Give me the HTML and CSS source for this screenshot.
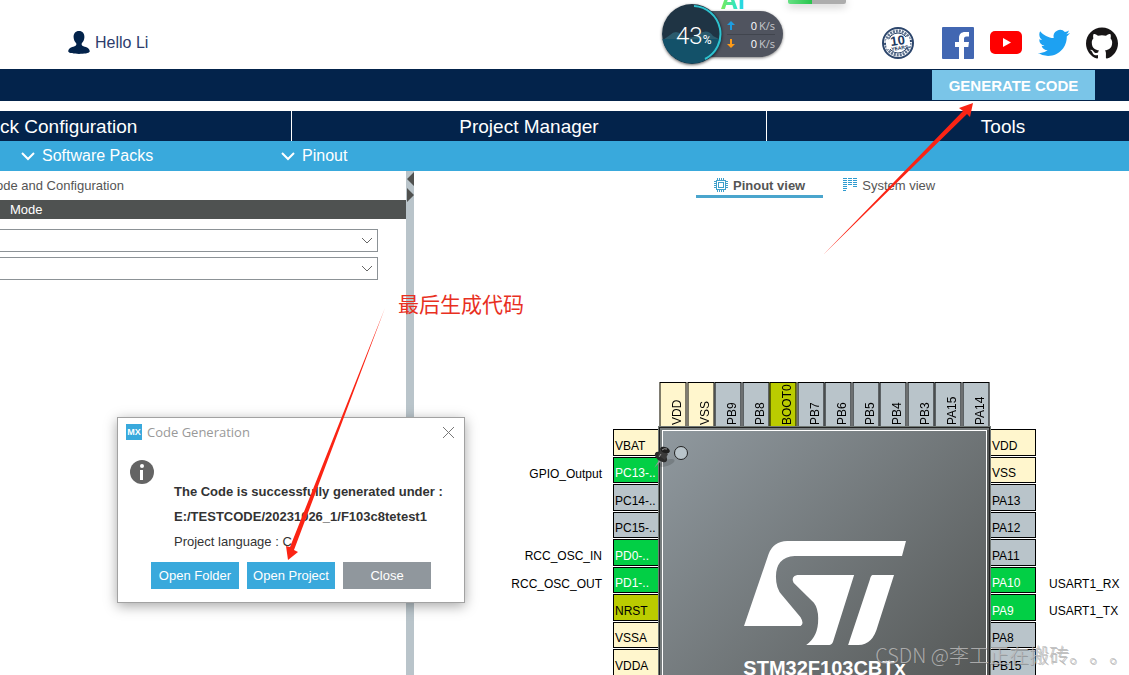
FILE: index.html
```html
<!DOCTYPE html>
<html lang="en">
<head>
  <meta charset="UTF-8" />
  <meta name="viewport" content="width=device-width, initial-scale=1.0"/>
  <title>Pinout &amp; Configuration</title>
  <link rel="stylesheet" href="styles.css">
</head>
<body>
  <header class="header">
    <a class="user" href="#">
      <svg width="22" height="24" viewBox="0 0 22 24"><path fill="#03234b" d="M11 0c3.600 0 5.600 2.600 5.400 6.200-.1 2.600-1.200 4.600-2.600 6-.5 1.600 0 2.400 1.600 3 3.600 1 6.200 2.200 6.400 5.400C21 22.400 16 23 11 23S1 22.400.2 20.600c.2-3.200 2.800-4.400 6.400-5.400 1.600-.6 2.100-1.400 1.600-3-1.400-1.400-2.500-3.400-2.600-6C5.400 2.600 7.400 0 11 0z"/></svg>
      <span>Hello Li</span>
    </a>
    <nav class="social">
      <a class="badge" href="#" aria-label="10 years">
        <svg width="32" height="32" viewBox="0 0 32 32">
          <circle cx="16" cy="16" r="15" fill="#fff" stroke="#2c466c" stroke-width="2"/>
          <circle cx="16" cy="16" r="12" fill="none" stroke="#5d7290" stroke-width="3" stroke-dasharray="2 1"/>
          <circle cx="16" cy="16" r="10" fill="#fff" stroke="#2c466c" stroke-width="1"/>
          <rect x="4" y="11" width="24" height="10" fill="#fff" transform="rotate(-8 16 16)"/>
          <g transform="rotate(-8 16 16)" fill="#1d3860" font-family="Liberation Sans, sans-serif" font-weight="bold" text-anchor="middle">
            <text x="16" y="18" font-size="13">10</text>
            <text x="17" y="23" font-size="5">YEARS</text>
          </g>
          <circle cx="3" cy="17" r="1" fill="#1d3860"/><circle cx="29" cy="14" r="1" fill="#1d3860"/>
        </svg>
      </a>
      <a href="#" aria-label="Facebook">
        <svg width="32" height="32" viewBox="0 0 32 32"><rect width="32" height="32" rx="1" fill="#4267b2"/><path fill="#fff" d="M17 32V20h-4v-5h4v-4c0-4 2.500-6 6-6h4v4.500h-2.500c-2 0-2.500 1-2.500 2.500v3h5l-.7 5H22v12z"/></svg>
      </a>
      <a href="#" aria-label="YouTube">
        <svg width="32" height="32" viewBox="0 0 32 32"><rect y="4" width="32" height="23" rx="5" fill="#f00"/><path fill="#fff" d="M13 11l8 4.500-8 4.500z"/></svg>
      </a>
      <a href="#" aria-label="Twitter">
        <svg width="32" height="32" viewBox="0 0 24 24"><path fill="#1da1f2" d="M23.953 4.570a10 10 0 01-2.825.775 4.958 4.958 0 002.163-2.723c-.951.555-2.005.959-3.127 1.184a4.920 4.920 0 00-8.384 4.482C7.690 8.095 4.067 6.130 1.640 3.162a4.822 4.822 0 00-.666 2.475c0 1.710.87 3.213 2.188 4.096a4.904 4.904 0 01-2.228-.616v.06a4.923 4.923 0 003.946 4.827 4.996 4.996 0 01-2.212.085 4.936 4.936 0 004.604 3.417 9.867 9.867 0 01-6.102 2.105c-.39 0-.779-.023-1.170-.067a13.995 13.995 0 007.557 2.209c9.053 0 13.998-7.496 13.998-13.985 0-.21 0-.42-.015-.63A9.935 9.935 0 0024 4.590z"/></svg>
      </a>
      <a href="#" aria-label="GitHub">
        <svg width="32" height="32" viewBox="0 0 24 24"><path fill="#171516" d="M12 .297c-6.630 0-12 5.373-12 12 0 5.303 3.438 9.800 8.205 11.385.6.113.82-.258.82-.577 0-.285-.01-1.040-.015-2.040-3.338.724-4.042-1.610-4.042-1.610C4.422 18.070 3.633 17.700 3.633 17.700c-1.087-.744.084-.729.084-.729 1.205.084 1.838 1.236 1.838 1.236 1.070 1.835 2.809 1.305 3.495.998.108-.776.417-1.305.76-1.605-2.665-.3-5.466-1.332-5.466-5.930 0-1.310.465-2.380 1.235-3.220-.135-.303-.54-1.523.105-3.176 0 0 1.005-.322 3.300 1.230.96-.267 1.980-.399 3-.405 1.020.006 2.040.138 3 .405 2.280-1.552 3.285-1.230 3.285-1.230.645 1.653.24 2.873.12 3.176.765.84 1.230 1.910 1.230 3.220 0 4.610-2.805 5.625-5.475 5.920.42.36.81 1.096.81 2.220 0 1.606-.015 2.896-.015 3.286 0 .315.21.69.825.57C20.565 22.092 24 17.592 24 12.297c0-6.627-5.373-12-12-12"/></svg>
      </a>
    </nav>
  </header>

  <div class="action-bar">
    <button class="generate-btn">GENERATE CODE</button>
  </div>

  <nav class="main-tabs">
    <a class="clock-tab" href="#">ck Configuration</a>
    <a href="#">Project Manager</a>
    <a class="tools-tab" href="#">Tools</a>
  </nav>

  <div class="sub-menu">
    <button><svg width="14" height="9" viewBox="0 0 14 9"><path d="M1 1l6 6 6-6" fill="none" stroke="#fff" stroke-width="2"/></svg>Software Packs</button>
    <button><svg width="14" height="9" viewBox="0 0 14 9"><path d="M1 1l6 6 6-6" fill="none" stroke="#fff" stroke-width="2"/></svg>Pinout</button>
  </div>

  <main class="workspace">
    <section class="config">
      <p class="config-title">ode and Configuration</p>
      <h2 class="mode-bar">Mode</h2>
      <div class="config-form">
        <div class="select-box">
          <select aria-label="High Speed Clock"><option></option></select>
          <svg width="12" height="8" viewBox="0 0 12 8"><path d="M1 1l5 5 5-5" fill="none" stroke="#666"/></svg>
        </div>
        <div class="select-box">
          <select aria-label="Low Speed Clock"><option></option></select>
          <svg width="12" height="8" viewBox="0 0 12 8"><path d="M1 1l5 5 5-5" fill="none" stroke="#666"/></svg>
        </div>
      </div>
    </section>

    <div class="splitter">
      <svg width="8" height="32" viewBox="0 0 8 32"><path fill="#50514f" d="M8 1v14L1 8zM1 17v14l7-7z"/></svg>
    </div>

    <section class="view">
      <div class="view-tabs">
        <button class="active">
          <svg width="14" height="14" viewBox="0 0 14 14" fill="none" stroke="#3f9fca"><path d="M3.500 0v14M5.500 0v14M7.500 0v14M9.500 0v14M0 3.500h14M0 5.500h14M0 7.500h14M0 9.500h14"/><rect x="2.500" y="2.500" width="9" height="9" fill="#fff"/><rect x="4.500" y="4.500" width="5" height="5"/></svg>
          Pinout view
        </button>
        <button>
          <svg width="14" height="14" viewBox="0 0 14 14" fill="#2f9bd0"><path d="M0 0h4v1H0zM5 0h4v1H5zM10 0h4v1h-4zM0 2h4v1H0zM5 2h4v1H5zM10 2h4v1h-4zM0 4h4v1H0zM5 4h4v1H5zM10 4h4v1h-4zM0 6h4v1H0zM5 6h4v1H5zM10 6h4v1h-4zM0 8h4v1H0zM10 8h4v1h-4zM0 10h4v1H0zM0 12h3v1H0z"/></svg>
          System view
        </button>
      </div>

      <div class="package">
        <ul class="pins pins-top">
          <li class="power">VDD</li>
          <li class="power">VSS</li>
          <li>PB9</li>
          <li>PB8</li>
          <li class="boot">BOOT0</li>
          <li>PB7</li>
          <li>PB6</li>
          <li>PB5</li>
          <li>PB4</li>
          <li>PB3</li>
          <li>PA15</li>
          <li>PA14</li>
        </ul>
        <ul class="signals signals-left">
          <li></li>
          <li>GPIO_Output</li>
          <li></li>
          <li></li>
          <li>RCC_OSC_IN</li>
          <li>RCC_OSC_OUT</li>
        </ul>
        <ul class="pins pins-left">
          <li class="power">VBAT</li>
          <li class="used">PC13-..</li>
          <li>PC14-..</li>
          <li>PC15-..</li>
          <li class="used">PD0-..</li>
          <li class="used">PD1-..</li>
          <li class="boot">NRST</li>
          <li class="power">VSSA</li>
          <li class="power">VDDA</li>
        </ul>
        <div class="chip">
          <span class="pin-one"></span>
          <svg class="pushpin" width="30" height="26" viewBox="0 0 30 26">
            <ellipse cx="15" cy="17" rx="8" ry="3" fill="#000" opacity=".15" transform="rotate(-20 15 17)"/>
            <path d="M2 22l6-9 2 1z" fill="#999"/>
            <ellipse cx="9" cy="11" rx="7" ry="4" fill="#2b2b2b" transform="rotate(35 9 11)"/>
            <path d="M9 3l7 5-3 6-7-5z" fill="#3a3a3a"/>
            <ellipse cx="13" cy="4" rx="5" ry="3" fill="#1f1f1f" transform="rotate(20 13 4)"/>
            <path d="M10 4q2-2 5-1M9 8l-2 3" stroke="#999" fill="none"/>
          </svg>
          <svg class="st-logo" width="162" height="104" viewBox="38 63 487 312" fill="#fff">
            <path d="M38 318L112 102Q126 64 168 63H525L513 108H190Q134 112 134 170Q134 206 152 225L208 292Q220 312 208 318z"/>
            <path d="M198 165H369L308 358Q304 375 295 375H225Q262 350 261 295Q261 265 248 248L187 188Q178 170 198 165z"/>
            <path d="M424 165H489L440 318Q425 375 382 375H351L416 180Q419 167 424 165z"/>
          </svg>
          <p>STM32F103CBTx</p>
        </div>
        <ul class="pins pins-right">
          <li class="power">VDD</li>
          <li class="power">VSS</li>
          <li>PA13</li>
          <li>PA12</li>
          <li>PA11</li>
          <li class="used">PA10</li>
          <li class="used">PA9</li>
          <li>PA8</li>
          <li>PB15</li>
        </ul>
        <ul class="signals signals-right">
          <li></li>
          <li></li>
          <li></li>
          <li></li>
          <li></li>
          <li>USART1_RX</li>
          <li>USART1_TX</li>
        </ul>
      </div>
    </section>
  </main>

  <!-- desktop speed monitor -->
  <div class="ai-tag">AI</div>
  <div class="memory-bar"></div>
  <div class="monitor">
    <div class="gauge">
      <svg width="60" height="60" viewBox="0 0 60 60">
        <circle cx="30" cy="30" r="30" fill="#1f3444"/>
        <path d="M8 31q6-6 12 0 8 6 16-1 10-6 15 2l8 4H1z" fill="#2b5b6d"/>
        <path d="M.5 35h59A30 30 0 01.5 35z" fill="#135169"/>
        <path d="M32 2a28 28 0 0111 53" fill="none" stroke="#2fc3cf" stroke-width="2"/>
      </svg>
      <p><b>43</b>%</p>
    </div>
    <div class="rates">
      <p><svg width="8" height="9" viewBox="0 0 8 9"><path fill="#1d9de0" d="M4 0l4 4H5v5H3V4H0z"/></svg>0<i>K/s</i></p>
      <p><svg width="8" height="9" viewBox="0 0 8 9"><path fill="#ff9a16" d="M4 9l4-4H5V0H3v5H0z"/></svg>0<i>K/s</i></p>
    </div>
  </div>

  <div class="dialog" role="dialog" aria-labelledby="dialog-title">
    <div class="dialog-head">
      <span class="mx">MX</span>
      <span id="dialog-title">Code Generation</span>
      <button class="close-x" aria-label="Close window"><svg width="11" height="11" viewBox="0 0 11 11"><path d="M0 0l11 11M11 0L0 11" stroke="#777"/></svg></button>
    </div>
    <div class="dialog-body">
      <svg width="24" height="24" viewBox="0 0 24 24"><circle cx="12" cy="12" r="12" fill="#646464"/><circle cx="12" cy="6" r="2" fill="#fff"/><path d="M10 10h3v10h-3z" fill="#fff"/></svg>
      <div class="message">
        <p><strong>The Code is successfully generated under :</strong></p>
        <p><strong>E:/TESTCODE/20231026_1/F103c8tetest1</strong></p>
        <p>Project language : C</p>
      </div>
    </div>
    <div class="dialog-actions">
      <button>Open Folder</button>
      <button>Open Project</button>
      <button class="close-btn">Close</button>
    </div>
  </div>

  <p class="note">最后生成代码</p>
  <svg class="arrows" width="1129" height="675" viewBox="0 0 1129 675" fill="#fb2414">
    <path d="M823 255L963 111l-4-3 14-5-3 14-3-3z"/>
    <path d="M385 308L290 547l-4-1 2 14 10-8-4-2z"/>
  </svg>
  <p class="watermark">CSDN @李工正在搬砖。。。</p>
</body>
</html>
```
FILE: styles.css
```css
* {
  box-sizing: border-box;
}

body {
  margin: 0;
  height: 100vh;
  display: flex;
  flex-direction: column;
  position: relative;
  overflow: hidden;
  background: #fff;
  color: #333;
  font-family: "Liberation Sans", Arial, sans-serif;
  font-size: 13px;
}

p, ul, h2 {
  margin: 0;
  padding: 0;
  list-style: none;
}

a {
  color: inherit;
  text-decoration: none;
}

button {
  font-family: inherit;
  border: none;
  padding: 0;
  cursor: pointer;
}

svg {
  display: block;
  flex-shrink: 0;
}

/* top of the window */
.header {
  height: 69px;
  padding: 16px 11px 0 68px;
  display: flex;
  align-items: center;
  justify-content: space-between;
}

.user {
  display: flex;
  align-items: center;
  gap: 5px;
  font-size: 16px;
  color: #2c3c6c;
}

.social {
  display: flex;
  gap: 16px;
}

.badge {
  margin-right: 12px;
}

.action-bar {
  height: 32px;
  padding: 1px 34px;
  display: flex;
  justify-content: flex-end;
  background: #03234b;
  margin-bottom: 10px;
}

.generate-btn {
  width: 163px;
  background: #7ac5e8;
  color: #fff;
  font-size: 15px;
  font-weight: bold;
}

.main-tabs {
  height: 30px;
  display: grid;
  grid-template-columns: 292px 475px 1fr;
  background: #03234b;
  color: #fff;
  font-size: 19px;
  line-height: 31px;
  text-align: center;
}

.main-tabs a {
  border-right: 1px solid #fff;
}

.main-tabs .clock-tab {
  text-align: left;
}

.main-tabs .tools-tab {
  border: none;
  padding-left: 110px;
}

.sub-menu {
  height: 30px;
  display: flex;
  background: #39a9dc;
}

.sub-menu button {
  width: 260px;
  padding-left: 21px;
  display: flex;
  align-items: center;
  gap: 7px;
  background: none;
  color: #fff;
  font-size: 16px;
}

.workspace {
  flex: 1;
  min-height: 0;
  display: grid;
  grid-template-columns: 406px 8px 1fr;
}

/* left panel */
.config-title {
  height: 29px;
  line-height: 29px;
  text-indent: -4px;
  color: #555;
}

.mode-bar {
  height: 19px;
  padding-left: 10px;
  background: #4f5251;
  color: #fff;
  font-size: 13px;
  font-weight: normal;
  line-height: 19px;
}

.config-form {
  padding: 10px 28px 0 0;
  display: flex;
  flex-direction: column;
  gap: 5px;
}

.select-box {
  position: relative;
}

.select-box select {
  display: block;
  width: 100%;
  height: 23px;
  appearance: none;
  background: #fff;
  border: 1px solid #8c9296;
  border-left: none;
  border-radius: 0;
}

.select-box svg {
  position: absolute;
  right: 5px;
  top: 8px;
}

.splitter {
  background: #b9c4ca;
}

/* pinout view */
.view {
  min-width: 0;
  overflow: hidden;
}

.view-tabs {
  padding-left: 282px;
  display: flex;
  gap: 2px;
}

.view-tabs button {
  height: 27px;
  padding: 4px 18px 0;
  display: flex;
  align-items: center;
  gap: 5px;
  background: none;
  border-bottom: 3px solid transparent;
  color: #555;
  font-size: 13px;
}

.view-tabs .active {
  border-color: #4aa5cd;
  font-weight: bold;
}

.package {
  margin-top: 184px;
  display: grid;
  grid-template-columns: 199px 46px 331px 46px 1fr;
  grid-template-rows: 45px 249px;
  color: #000;
  font-size: 12px;
  line-height: 14px;
}

.package > * {
  grid-row: 2;
}

.pins,
.signals {
  display: grid;
  grid-template-rows: repeat(9, 1fr);
  gap: 1px;
  padding-top: 2px;
}

.pins li {
  padding: 0 1px 2px;
  display: flex;
  align-items: flex-end;
  background: #b9c4ca;
  border: 1px solid #000;
}

.pins .power {
  background: #fff6cd;
}

.pins .boot {
  background: #bbcc00;
}

.pins .used {
  background: #02cf45;
  color: #fff;
}

.package .pins-top {
  grid-row: 1;
  grid-column: 3;
  grid-template-rows: 1fr;
  grid-template-columns: repeat(12, 1fr);
  padding: 0 1px;
}

.pins-top li {
  writing-mode: vertical-rl;
  transform: rotate(180deg);
  align-items: flex-end;
  padding: 1px 2px;
}

.signals-left {
  grid-column: 1;
  text-align: right;
}

.pins-left {
  grid-column: 2;
}

.pins-right {
  grid-column: 4;
}

.signals-right {
  grid-column: 5;
}

.signals li {
  padding: 10px 11px 0 13px;
}

.chip {
  grid-column: 3;
  position: relative;
  padding-top: 113px;
  display: flex;
  flex-direction: column;
  align-items: center;
  gap: 11px;
  border: 1px solid #222;
  border-bottom: none;
  outline: 1px solid #707875;
  background: linear-gradient(135deg, #90999f, #555857);
  box-shadow: inset 2px 2px 0 #777d7e, inset -2px 0 0 #555857, inset 3px 3px 0 #fff, inset -3px 0 0 #fff;
  color: #fff;
}

.chip p {
  font-size: 20px;
  font-weight: bold;
  line-height: 24px;
}

.pin-one {
  position: absolute;
  left: 14px;
  top: 18px;
  width: 14px;
  height: 14px;
  border: 1px solid #222;
  border-radius: 50%;
  background: #b9c4ca;
}

.pushpin {
  position: absolute;
  left: -8px;
  top: 18px;
}

/* speed monitor floating over the window */
.ai-tag {
  position: absolute;
  left: 721px;
  top: -14px;
  font-family: "Open Sans", sans-serif;
  font-size: 24px;
  font-weight: bold;
  line-height: 28px;
  color: transparent;
  background: linear-gradient(90deg, #7bea55, #2ee6c4 60%, #25cdf5);
  background-clip: text;
}

.memory-bar {
  position: absolute;
  left: 788px;
  top: 0;
  width: 58px;
  height: 4px;
  border-radius: 0 0 2px 2px;
  background: linear-gradient(90deg, #66e184, #27c44c 42%, #adadad 42%);
  box-shadow: 0 2px 8px rgba(0,0,0,0.3);
}

.monitor {
  position: absolute;
  left: 662px;
  top: 4px;
  width: 121px;
  height: 60px;
  display: flex;
  align-items: center;
}

.gauge {
  position: relative;
  z-index: 1;
  border-radius: 50%;
  box-shadow: 0 1px 3px rgba(0,0,0,0.6);
}

.gauge p {
  position: absolute;
  left: 14px;
  top: 18px;
  color: #fff;
  font-family: Roboto, sans-serif;
  font-size: 12px;
  line-height: 28px;
  white-space: nowrap;
}

.gauge b {
  font-size: 24px;
  font-weight: 300;
}

.rates {
  flex: 1;
  height: 46px;
  margin-left: -20px;
  padding: 6px 8px 0 25px;
  border-radius: 0 23px 23px 0;
  background: #50545f;
  box-shadow: 0 1px 3px rgba(0,0,0,0.5);
  color: #fff;
  font-family: "Open Sans", sans-serif;
  font-size: 11px;
  line-height: 17px;
}

.rates p {
  display: flex;
  align-items: center;
}

.rates p + p {
  border-top: 1px solid #41454e;
}

.rates svg {
  margin-right: auto;
}

.rates i {
  margin-left: 2px;
  font-style: normal;
  color: #c5c8cc;
}

/* dialog */
.dialog {
  position: absolute;
  left: 117px;
  top: 417px;
  width: 348px;
  height: 186px;
  padding: 6px 8px;
  background: #fff;
  border: 1px solid #a2a2a2;
  box-shadow: 0 3px 12px rgba(0,0,0,0.35);
}

.dialog-head {
  height: 16px;
  display: flex;
  align-items: center;
  gap: 5px;
  color: #999;
  font-family: "Open Sans", sans-serif;
}

.mx {
  width: 16px;
  height: 16px;
  background: #39a9dc;
  color: #fff;
  font-family: "Liberation Sans", Arial, sans-serif;
  font-size: 9px;
  font-weight: bold;
  line-height: 16px;
  text-align: center;
}

.close-x {
  margin-left: auto;
  margin-right: 2px;
  background: none;
}

.dialog-body {
  padding: 20px 0 0 4px;
  display: flex;
  gap: 20px;
}

.message {
  padding-top: 19px;
  line-height: 25px;
  white-space: nowrap;
}

.dialog-actions {
  margin-top: 8px;
  display: flex;
  justify-content: center;
  gap: 8px;
}

.dialog-actions button {
  width: 88px;
  height: 27px;
  background: #39a9dc;
  color: #fff;
  font-size: 13px;
}

.dialog-actions .close-btn {
  background: #90979d;
}

/* drawn over the screen */
.note {
  position: absolute;
  left: 398px;
  top: 288px;
  color: #e8301f;
  font-family: "Noto Sans CJK SC", sans-serif;
  font-size: 21px;
  line-height: 30px;
}

.arrows {
  position: absolute;
  left: 0;
  top: 0;
  pointer-events: none;
}

.watermark {
  position: absolute;
  right: 0;
  bottom: 5px;
  color: rgba(185,185,185,0.85);
  font-family: "Noto Sans CJK SC", sans-serif;
  font-size: 20px;
  font-weight: 300;
  line-height: 30px;
  text-shadow: 1px 1px 0 rgba(90,90,90,0.4);
  text-spacing-trim: space-all;
  white-space: nowrap;
}
```
